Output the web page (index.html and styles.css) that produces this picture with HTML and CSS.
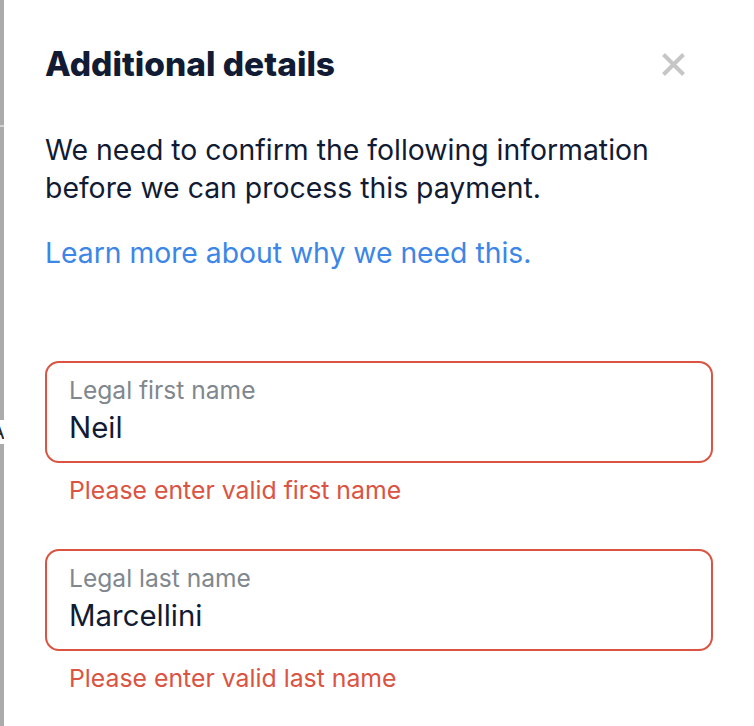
FILE: index.html
```html
<!DOCTYPE html>
<html lang="en">
<head>
  <meta charset="UTF-8" />
  <meta name="viewport" content="width=device-width, initial-scale=1.0"/>
  <title>Additional details</title>
  <link rel="stylesheet" href="styles.css">
</head>
<body>

  <div class="screen">
    <div class="backdrop">
      <span class="backdrop-rule"></span>
      <span class="backdrop-glyph">A</span>
    </div>

    <div class="sheet">
      <div class="sheet-head">
        <h2 class="sheet-title">Additional details</h2>
        <button class="close-btn" type="button" aria-label="Close">
          <svg width="25" height="25" viewBox="0 0 25 25">
            <path d="M2.5 2.5 L22.5 22.5 M22.5 2.5 L2.5 22.5" stroke="#c6c6c6" stroke-width="4" fill="none"/>
          </svg>
        </button>
      </div>

      <p class="intro">We need to confirm the following information before we can process this payment.</p>
      <a class="learn-link" href="#">Learn more about why we need this.</a>

      <form class="details-form">
        <div class="field">
          <label class="field-box">
            <span class="field-label">Legal first name</span>
            <input class="field-input" type="text" value="Neil">
          </label>
          <div class="field-error">Please enter valid first name</div>
        </div>

        <div class="field">
          <label class="field-box">
            <span class="field-label">Legal last name</span>
            <input class="field-input" type="text" value="Marcellini">
          </label>
          <div class="field-error">Please enter valid last name</div>
        </div>
      </form>
    </div>
  </div>

</body>
</html>
```

FILE: styles.css
```css
body {
  margin: 0;
  padding: 0;
  font-family: 'Inter', 'Liberation Sans', sans-serif;
  background: #ffffff;
  color: #111b33;
}

.screen {
  display: flex;
  min-height: 726px;
}

.backdrop {
  width: 4px;
  background: #ababab;
  position: relative;
  overflow: hidden;
  flex-shrink: 0;
}

.backdrop-rule {
  display: block;
  margin-top: 125px;
  height: 2px;
  background: #d4d4d4;
}

.backdrop-glyph {
  position: absolute;
  top: 420px;
  left: -9px;
  font-size: 20px;
  color: #222;
  background: #fff;
}

.sheet {
  flex: 1;
  padding: 42px 41px 0;
}

.sheet-head {
  display: flex;
  justify-content: space-between;
  align-items: center;
}

.sheet-title {
  margin: 0;
  font-size: 33.5px;
  line-height: 44px;
  font-weight: 800;
  color: #111b33;
}

.close-btn {
  border: none;
  background: none;
  padding: 0;
  margin-right: 27px;
  width: 25px;
  height: 25px;
  cursor: pointer;
}

.close-btn svg {
  display: block;
}

.intro {
  margin: 45px 0 0;
  font-size: 28.4px;
  line-height: 38px;
  color: #111b33;
}

.learn-link {
  display: block;
  margin-top: 27px;
  font-size: 28.3px;
  line-height: 38px;
  color: #3b86e6;
  text-decoration: none;
}

.details-form {
  margin-top: 89px;
  display: flex;
  flex-direction: column;
  gap: 43px;
}

.field-box {
  display: flex;
  flex-direction: column;
  height: 102px;
  box-sizing: border-box;
  border: 2px solid #db5341;
  border-radius: 14px;
  padding: 12px 22px 0;
}

.field-label {
  font-size: 24.6px;
  line-height: 30px;
  color: #80878e;
}

.field-input {
  border: none;
  outline: none;
  padding: 0;
  margin-top: 6px;
  font-family: inherit;
  font-size: 29.4px;
  line-height: 34px;
  height: 34px;
  color: #111b33;
  background: transparent;
}

.field-error {
  padding: 11px 24px 0;
  font-size: 24.8px;
  line-height: 32px;
  color: #db5341;
}
```
